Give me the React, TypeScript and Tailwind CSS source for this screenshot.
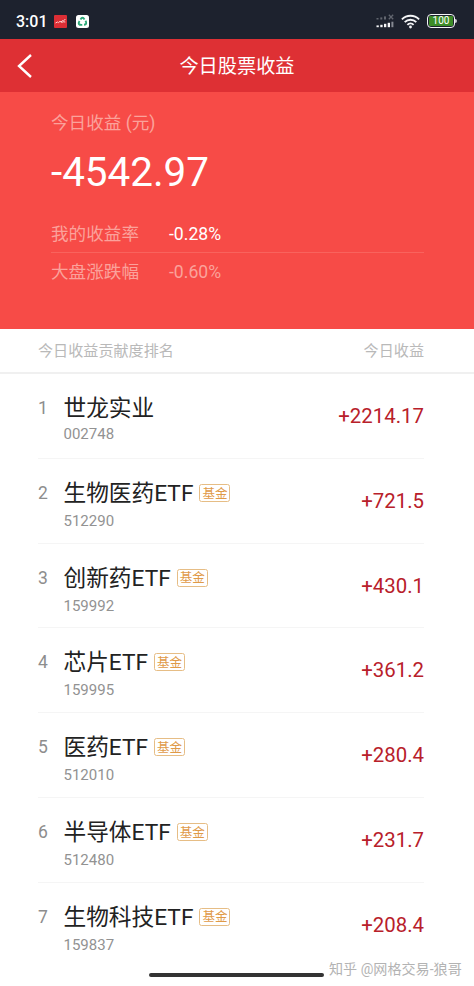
import React from "react";

type Holding = {
  name: string;
  code: string;
  profit: string;
  isFund: boolean;
};

const holdings: Holding[] = [
  { name: "世龙实业", code: "002748", profit: "+2214.17", isFund: false },
  { name: "生物医药ETF", code: "512290", profit: "+721.5", isFund: true },
  { name: "创新药ETF", code: "159992", profit: "+430.1", isFund: true },
  { name: "芯片ETF", code: "159995", profit: "+361.2", isFund: true },
  { name: "医药ETF", code: "512010", profit: "+280.4", isFund: true },
  { name: "半导体ETF", code: "512480", profit: "+231.7", isFund: true },
  { name: "生物科技ETF", code: "159837", profit: "+208.4", isFund: true },
];

function SignalIcon() {
  return (
    <svg className="w-[19px] h-[15px]" viewBox="0 0 19 15">
      <g fill="#62666f">
        <rect x="0.5" y="4" width="2" height="1.5" />
        <rect x="4.3" y="3.4" width="2" height="2.1" />
        <rect x="8" y="2.4" width="2" height="3.1" />
      </g>
      <path d="M12.8 .8l4.4 4.4M17.2 .8l-4.4 4.4" stroke="#62666f" strokeWidth="1.3" />
      <g fill="#f4f5f7">
        <rect x="0.5" y="11.4" width="2.3" height="1.8" />
        <rect x="4.3" y="10.8" width="2.3" height="2.4" />
        <rect x="8" y="9.8" width="2.3" height="3.4" />
        <rect x="11.7" y="8.8" width="2.3" height="4.4" />
      </g>
      <rect x="15.4" y="7.7" width="2" height="5.5" fill="#858992" />
    </svg>
  );
}

function WifiIcon() {
  return (
    <svg className="w-[19px] h-[15px]" viewBox="0 0 19 15" fill="none" stroke="#f4f5f7" strokeWidth="1.9">
      <path d="M.9 5.3a12.2 12.2 0 0 1 17.2 0" />
      <path d="M3.7 8.1a8.2 8.2 0 0 1 11.6 0" />
      <path d="M6.4 10.8a4.4 4.4 0 0 1 6.2 0" />
      <circle cx="9.5" cy="13" r="1.4" fill="#f4f5f7" stroke="none" />
    </svg>
  );
}

function StatusBar() {
  return (
    <div className="h-[39px] bg-[#1d222e] flex items-center pl-4 pr-[17px] pt-[3px]">
      <span className="w-[30px] pt-px text-[16px] leading-none font-medium text-white whitespace-nowrap">3:01</span>
      <svg className="w-[13px] h-[13px] ml-2" viewBox="0 0 13 13">
        <rect width="13" height="13" rx="1" fill="#dc2e35" />
        <path d="M1.5 8l2-1 1 .6 1.5-1.3 1 .7 1.5-1.5.8.6L11.4 4M7.3 7.5l2-.7 2 .2" stroke="#ffd0ce" strokeWidth="1" fill="none" />
      </svg>
      <svg className="w-[13px] h-[13px] ml-[9px]" viewBox="0 0 13 13">
        <rect width="13" height="13" rx="2.5" fill="#fff" />
        <path d="M4.5 4.4Q6.5 1.2 8.5 4.4M9.5 5.8Q11.6 9.6 8 9.8M6.3 9.9Q1 10.2 3.5 6" stroke="#2ba878" strokeWidth="1.9" fill="none" />
      </svg>
      <div className="ml-auto flex items-center">
        <SignalIcon />
        <div className="ml-[6px] flex"><WifiIcon /></div>
        <div className="ml-[7px] w-7 h-[14px] rounded-[4px] border-[1.5px] border-[#f4f5f7] p-px">
          <div className="h-full rounded-[1px] bg-[#3c8c27] flex items-center justify-center text-[10px] leading-none text-white">
            100
          </div>
        </div>
        <div className="w-[2px] h-1 bg-[#c7c9cd] rounded-r-sm" />
      </div>
    </div>
  );
}

function ProfitSummary() {
  return (
    <section className="h-[237px] bg-[#f74b47] pl-[51px] pr-[50px] pt-[19px]">
      <p className="h-6 leading-6 text-[17.6px] text-[#fba29b]">今日收益 (元)</p>
      <p className="mt-[14px] h-12 leading-[48px] text-[40.4px] text-white">-4542.97</p>
      <div className="mt-[19px] h-[37px] pt-px border-b border-[#f9635d] flex items-center text-[17.6px]">
        <span className="w-[118px] text-[#fba29b]">我的收益率</span>
        <span className="text-white">-0.28%</span>
      </div>
      <div className="h-9 pt-[2px] flex items-center text-[17.6px] text-[#fba29b]">
        <span className="w-[118px]">大盘涨跌幅</span>
        <span>-0.60%</span>
      </div>
    </section>
  );
}

function HoldingRow({ rank, holding }: { rank: number; holding: Holding }) {
  return (
    <li className="group h-[84.75px] flex border-b border-[#f5f5f5] last:border-0">
      <span className="w-[25.5px] pt-[22px] text-[17.5px] leading-6 text-[#8d8d8d]">{rank}</span>
      <div className="pt-[19px]">
        <div className="h-8 flex items-center">
          <span className="text-[22.7px] leading-8 text-[#222]">{holding.name}</span>
          {holding.isFund && (
            <span className="ml-[6px] mb-[2px] pt-[2px] w-[31px] h-[18px] rounded-[2.5px] border border-[#e6bd85] flex items-center justify-center text-[12.5px] leading-none text-[#df9a48]">
              基金
            </span>
          )}
        </div>
        <p className="pt-px group-first:-mt-[2px] text-[15px] leading-5 text-[#929292]">{holding.code}</p>
      </div>
      <span className="ml-auto pt-[30px] text-[20.4px] leading-6 text-[#b8202a]">{holding.profit}</span>
    </li>
  );
}

export default function App() {
  return (
    <div className="relative w-[474px] h-[986px] overflow-hidden bg-white font-['Roboto','Noto_Sans_CJK_SC',sans-serif]">
      <StatusBar />
      <header className="h-[53px] bg-[#de3034] grid grid-cols-[1fr_auto_1fr] items-center text-white">
        <svg className="ml-[17px] w-4 h-6" viewBox="0 0 16 24" fill="none" stroke="currentColor" strokeWidth="2.4">
          <path d="M14 1L2 12l12 11" />
        </svg>
        <h1 className="pt-[3px] text-[19.2px] leading-7">今日股票收益</h1>
      </header>
      <ProfitSummary />
      <div className="h-[45px] pt-[2px] border-b-2 border-[#f0f0f0] pl-[38px] pr-[50px] flex items-center justify-between text-[15.1px] text-[#b9b9b9]">
        <span>今日收益贡献度排名</span>
        <span>今日收益</span>
      </div>
      <ul className="pl-[38px] pr-[50px]">
        {holdings.map((holding, i) => (
          <HoldingRow key={holding.code} rank={i + 1} holding={holding} />
        ))}
      </ul>

      {/* Gesture bar */}
      <div className="absolute left-[149px] bottom-[9px] w-[175px] h-1 rounded-full bg-[#333]" />
      <div className="absolute left-[329px] bottom-[7px] text-[14.1px] leading-5 whitespace-nowrap text-[#b3b3b3]">
        知乎 @网格交易-狼哥
      </div>
    </div>
  );
}
